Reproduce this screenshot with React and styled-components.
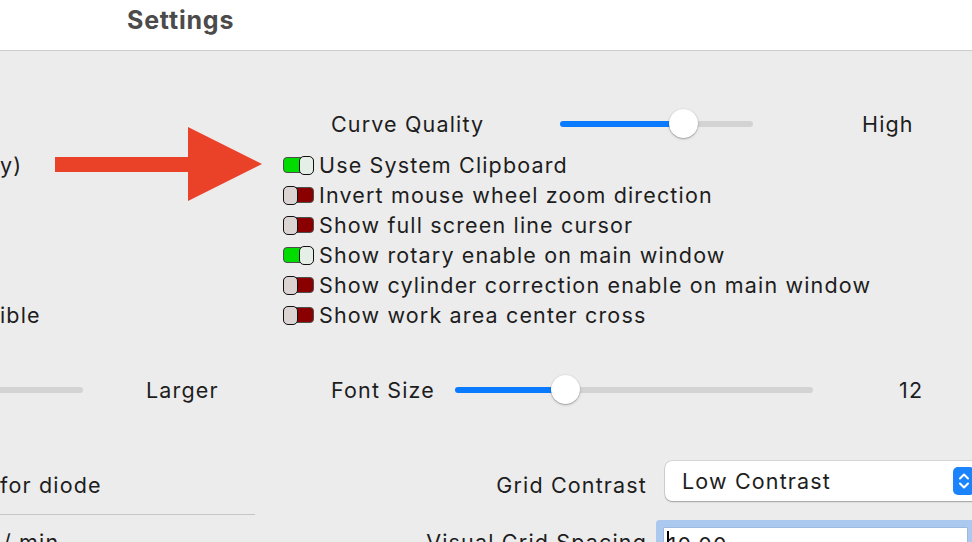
import React from "react";
import styled, { createGlobalStyle } from "styled-components";

const GlobalStyle = createGlobalStyle`
  html, body {
    margin: 0;
    padding: 0;
    background: #ececec;
    overflow: hidden;
  }
  body {
    font-family: Inter, "Liberation Sans", sans-serif;
    color: #1d1d1d;
  }
`;

const Window = styled.div`
  position: relative;
  width: 972px;
  height: 542px;
  overflow: hidden;
  background: #ececec;
`;

const TitleBar = styled.header`
  height: 50px;
  background: #ffffff;
  border-bottom: 1px solid #cdcdcd;
  display: flex;
  align-items: flex-start;
  padding-left: 127px;
  box-sizing: content-box;
`;

const Title = styled.h1`
  margin: 5px 0 0;
  font-size: 25px;
  line-height: 30px;
  font-weight: 700;
  color: #4b4b4b;
  letter-spacing: 0.8px;
`;

const Body = styled.main`
  display: flex;
  flex-direction: column;
  padding-top: 58px;
`;

const Row = styled.section`
  display: grid;
  grid-template-columns: 283px 1fr;
  height: ${(p) => p.$height}px;
  margin-top: ${(p) => p.$top || 0}px;
  align-items: ${(p) => p.$align || "center"};
`;

const Cell = styled.div`
  display: flex;
  align-items: ${(p) => (p.$top ? "flex-start" : "center")};
  min-width: 0;
  height: 100%;
`;

const Label = styled.span`
  font-size: 21.5px;
  letter-spacing: 1.15px;
  line-height: ${(p) => p.$line || 30}px;
  white-space: nowrap;
  width: ${(p) => (p.$width ? `${p.$width}px` : "auto")};
  margin-left: ${(p) => p.$left || 0}px;
  margin-top: ${(p) => p.$mt || 0}px;
  text-align: ${(p) => p.$align || "left"};
  flex-shrink: 0;
`;

const Track = styled.div`
  position: relative;
  width: ${(p) => p.$width}px;
  height: 6px;
  border-radius: 3px;
  flex-shrink: 0;
  background: linear-gradient(
    to right,
    #0a7bff 0,
    #0a7bff ${(p) => p.$fill}px,
    #d3d3d3 ${(p) => p.$fill}px
  );
`;

const Knob = styled.span`
  position: absolute;
  top: 50%;
  width: 29px;
  height: 29px;
  margin: -15px 0 0 -15px;
  border-radius: 50%;
  background: #ffffff;
  box-shadow: 0 0.5px 1px rgba(0, 0, 0, 0.35), 0 1px 3px rgba(0, 0, 0, 0.18);
`;

const Slider = ({ width, value }) => (
  <Track $width={width} $fill={value}>
    <Knob style={{ left: value }} />
  </Track>
);

const LeftTrack = styled.div`
  width: 83px;
  height: 6px;
  border-radius: 0 3px 3px 0;
  background: #d3d3d3;
  flex-shrink: 0;
`;

const LeftStack = styled.div`
  display: flex;
  flex-direction: column;
  justify-content: space-between;
  height: 100%;
`;

const ToggleList = styled.ul`
  list-style: none;
  margin: 0;
  padding: 0;
  display: flex;
  flex-direction: column;
`;

const ToggleItem = styled.li`
  display: flex;
  align-items: center;
  height: 30px;
  gap: 5px;
`;

const Switch = styled.span`
  display: inline-flex;
  align-items: center;
  justify-content: ${(p) => (p.$on ? "flex-end" : "flex-start")};
  width: 31px;
  height: 16px;
  box-sizing: border-box;
  border: 1px solid #4d4d4d;
  border-radius: 4px;
  background: ${(p) => (p.$on ? "#00dc00" : "#8a0000")};
  flex-shrink: 0;
`;

const SwitchKnob = styled.span`
  width: 15px;
  height: 19px;
  box-sizing: border-box;
  margin: 0 -1px;
  border: 1.5px solid #111111;
  border-radius: 5px;
  background: ${(p) => (p.$on ? "#e5eee7" : "#dcd3d3")};
`;

const Toggle = ({ on, children }) => (
  <ToggleItem>
    <Switch $on={on}>
      <SwitchKnob $on={on} />
    </Switch>
    <Label>{children}</Label>
  </ToggleItem>
);

const Select = styled.div`
  display: flex;
  align-items: center;
  justify-content: space-between;
  width: 316px;
  height: 40px;
  margin-left: 18px;
  padding: 0 0 0 17px;
  box-sizing: border-box;
  background: #ffffff;
  border-radius: 7px;
  box-shadow: 0 0 0 0.5px rgba(0, 0, 0, 0.18), 0 1px 1.5px rgba(0, 0, 0, 0.25);
  flex-shrink: 0;
`;

const Stepper = styled.span`
  display: flex;
  align-items: center;
  justify-content: center;
  width: 22px;
  height: 28px;
  margin-right: 6px;
  border-radius: 5px;
  background: #1b83fb;
`;

const LeftLine = styled.div`
  width: 255px;
  margin-top: 5px;
  border-top: 1px solid #c6c6c6;
`;

const LeftBottom = styled.div`
  display: flex;
  flex-direction: column;
  align-self: stretch;
`;

const SpacingInput = styled.div`
  display: flex;
  align-items: flex-start;
  width: 305px;
  height: 44px;
  margin: 12px 0 0 16px;
  padding: 3px 0 0 3px;
  box-sizing: border-box;
  background: #ffffff;
  border: 1px solid #9db9df;
  box-shadow: 0 0 0 7px #abc8ee;
  border-radius: 1px;
  font-size: 21.5px;
  letter-spacing: 1.15px;
  line-height: 28px;
  flex-shrink: 0;
`;

const Caret = styled.span`
  width: 1.5px;
  height: 25px;
  background: #000;
  margin-right: -1px;
`;

const Arrow = styled.svg`
  position: absolute;
  left: 55px;
  top: 127px;
  pointer-events: none;
`;

export default function App() {
  return (
    <>
      <GlobalStyle />
      <Window>
        <TitleBar>
          <Title>Settings</Title>
        </TitleBar>
        <Body>
          <Row $height={30}>
            <Cell />
            <Cell>
              <Label $left={48} $width={229}>
                Curve Quality
              </Label>
              <Slider width={193} value={124} />
              <Label $left={109}>High</Label>
            </Cell>
          </Row>

          <Row $height={180} $top={11}>
            <Cell>
              <LeftStack>
                <Label>y)</Label>
                <Label>ible</Label>
              </LeftStack>
            </Cell>
            <Cell>
              <ToggleList>
                <Toggle on>Use System Clipboard</Toggle>
                <Toggle>Invert mouse wheel zoom direction</Toggle>
                <Toggle>Show full screen line cursor</Toggle>
                <Toggle on>Show rotary enable on main window</Toggle>
                <Toggle>Show cylinder correction enable on main window</Toggle>
                <Toggle>Show work area center cross</Toggle>
              </ToggleList>
            </Cell>
          </Row>

          <Row $height={30} $top={45}>
            <Cell>
              <LeftTrack />
              <Label $left={63}>Larger</Label>
            </Cell>
            <Cell>
              <Label $left={48} $width={124}>
                Font Size
              </Label>
              <Slider width={358} value={111} />
              <Label $left={86}>12</Label>
            </Cell>
          </Row>

          <Row $height={54} $top={56} $align="start">
            <Cell $top>
              <LeftBottom>
                <Label $line={48}>for diode</Label>
                <LeftLine />
              </LeftBottom>
            </Cell>
            <Cell $top>
              <Label $width={364} $align="right" $mt={9}>
                Grid Contrast
              </Label>
              <Select>
                <Label>Low Contrast</Label>
                <Stepper>
                  <svg width="12" height="20" viewBox="0 0 12 20">
                    <path
                      d="M2 7.5 L6 3.5 L10 7.5 M2 12.5 L6 16.5 L10 12.5"
                      fill="none"
                      stroke="#fff"
                      strokeWidth="2"
                      strokeLinecap="round"
                      strokeLinejoin="round"
                    />
                  </svg>
                </Stepper>
              </Select>
            </Cell>
          </Row>

          <Row $height={50} $align="start">
            <Cell $top>
              <Label $left={3} $mt={12}>
                / min
              </Label>
            </Cell>
            <Cell $top>
              <Label $width={364} $align="right" $mt={12}>
                Visual Grid Spacing
              </Label>
              <SpacingInput>
                <Caret />
                10.00
              </SpacingInput>
            </Cell>
          </Row>
        </Body>

        <Arrow width="208" height="74" viewBox="0 0 208 74">
          <rect x="0" y="30" width="134" height="15" fill="#ea4129" />
          <polygon points="133,0 207,37 133,74" fill="#ea4129" />
        </Arrow>
      </Window>
    </>
  );
}
